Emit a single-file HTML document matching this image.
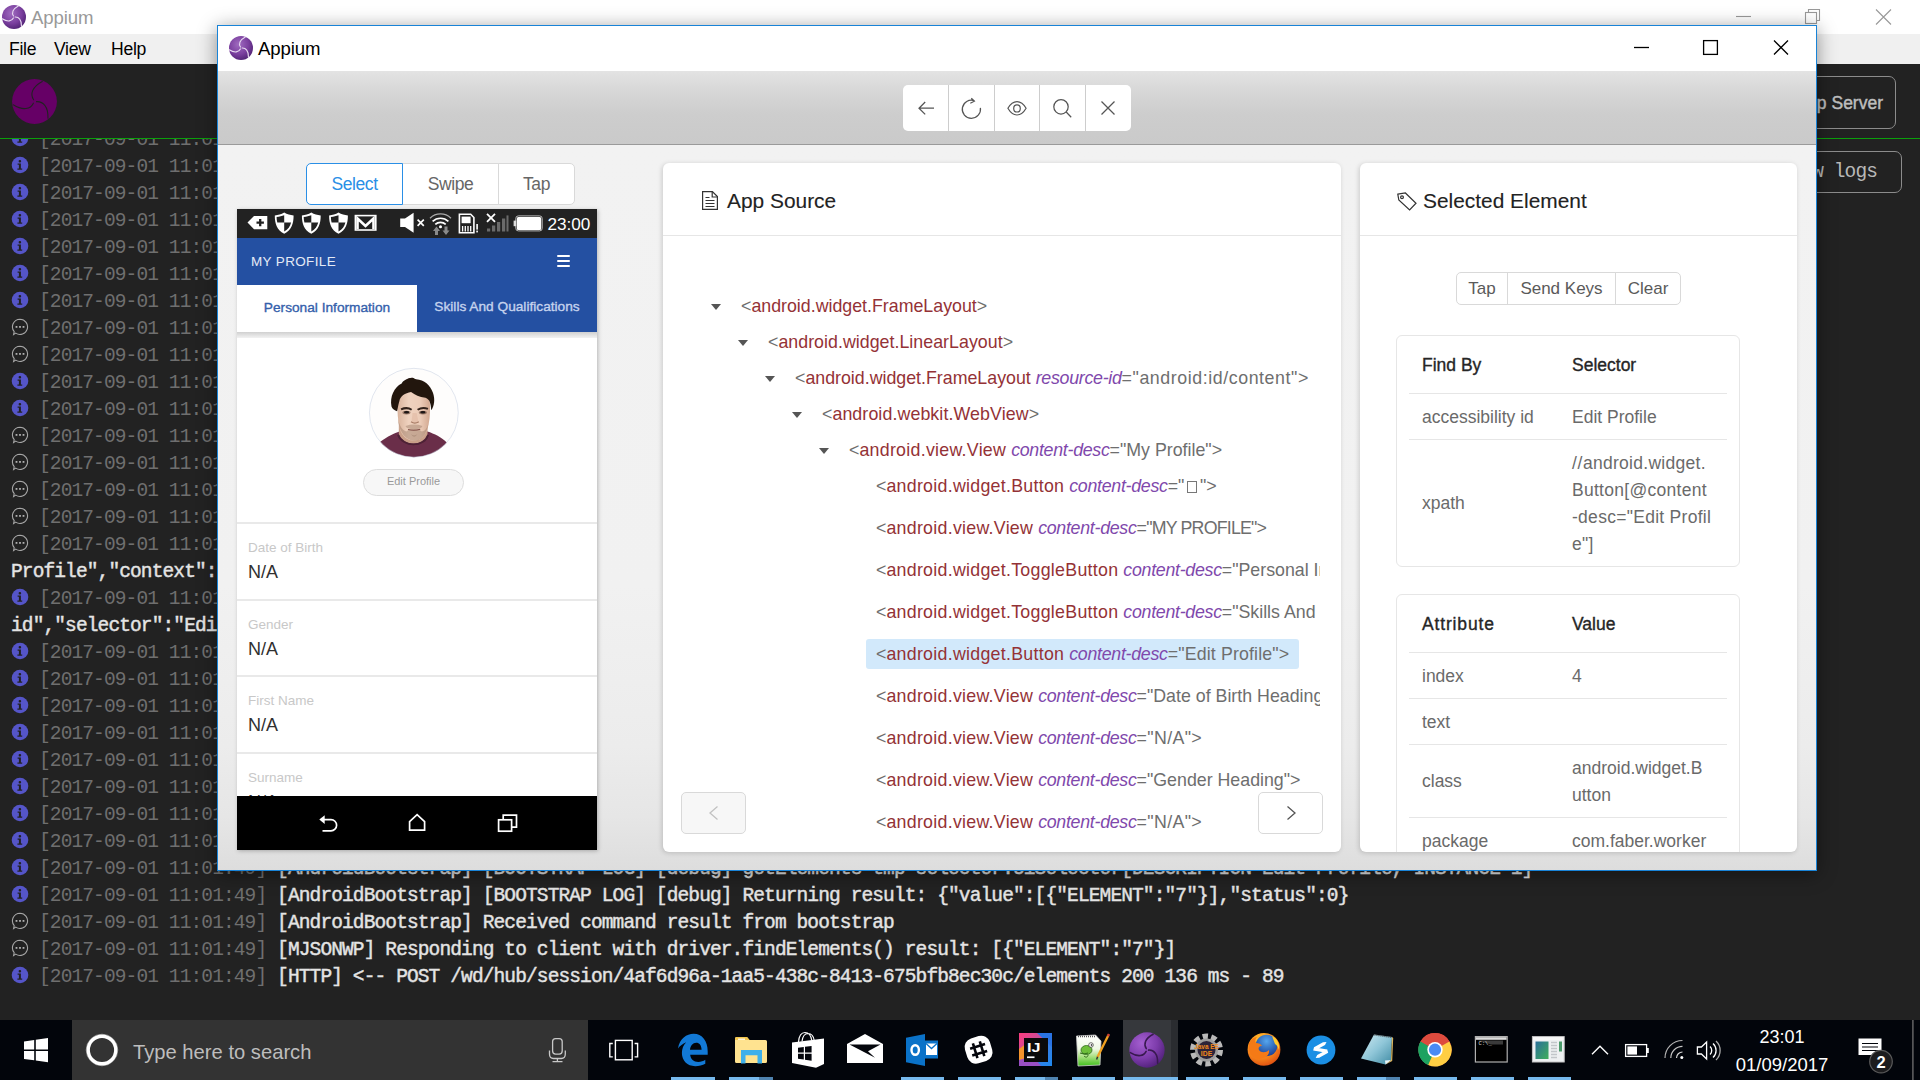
<!DOCTYPE html>
<html>
<head>
<meta charset="utf-8">
<title>Appium</title>
<style>
*{box-sizing:border-box;margin:0;padding:0}
html,body{width:1920px;height:1080px;overflow:hidden;background:#222222;font-family:"Liberation Sans",sans-serif;}
.abs{position:absolute}
#bg{position:absolute;left:0;top:0;width:1920px;height:1020px;background:#222222;overflow:hidden}
#bg .title{position:absolute;left:0;top:0;width:1920px;height:34px;background:#fff}
#bg .title .t{position:absolute;left:31px;top:7px;font-size:18.600px;color:#999;letter-spacing:-0.100px}
#bg .menu{position:absolute;left:0;top:34px;width:1920px;height:30px;background:#f0f0f0}
#bg .menu span{position:absolute;top:4.500px;font-size:17.600px;letter-spacing:-0.300px;color:#000}
#bg .green{position:absolute;left:0;top:138px;width:1920px;height:1px;background:#0ba00b}
.log{position:absolute;left:0;width:1920px;height:27px;font-family:"Liberation Mono",monospace;font-size:19.5px;letter-spacing:-0.88px;line-height:27px;white-space:pre;color:#e4e4e4;-webkit-text-stroke:0.420px #e4e4e4}
.log .ts{color:#6f6f6f;-webkit-text-stroke:0}
.log .tx{position:absolute;left:39px;top:1.500px}
.log .cont{position:absolute;left:11px;top:1.500px}
.ic{position:absolute;left:11px;top:3.900px;width:18px;height:18px}
#logwrap{position:absolute;left:0;top:139px;width:1920px;height:881px;overflow:hidden}
#fg{position:absolute;left:217px;top:25px;width:1600px;height:846px;border:1px solid #1883d7;background:linear-gradient(to bottom,#f2f2f2 0px,#f2f2f2 119px,#f1f1f1 560px,#ececec 720px,#e6e6e6 790px,#dddddd 846px);box-shadow:0 3px 18px rgba(0,0,0,.42);overflow:hidden}
#fg .wtitle{position:absolute;left:0;top:0;width:100%;height:45px;background:#fff}
#fg .wtitle .t{position:absolute;left:40px;top:12.300px;font-size:18.600px;color:#000;letter-spacing:-0.100px}
#fg .tool{position:absolute;left:0;top:45px;width:100%;height:74px;background:linear-gradient(#e3e3e3 0%,#d6d6d6 30%,#cdcdcd 60%,#cacaca 100%);border-bottom:1px solid #9a9a9a}
.card{position:absolute;background:#fff;border-radius:6px;box-shadow:-1px 1px 5px rgba(0,0,0,.17);overflow:hidden}

#fgi{position:absolute;left:-218px;top:-26px;width:1920px;height:1080px}
.tb{background:#fff;border-radius:5px;overflow:hidden}
.tb i{position:absolute;top:0;width:1px;height:46px;background:#cdcdcd}
.seg{font-size:17.500px;letter-spacing:-0.400px;color:#666}
.seg span{position:absolute;top:0;height:42px;line-height:40px;text-align:center;background:#fff;border:1px solid #d9d9d9}
.seg span:first-child{border-radius:5px 0 0 5px}
.seg span:last-child{border-radius:0 5px 5px 0}
.seg span.on{color:#2a8fe6;border-color:#2a8fe6;z-index:2}
#phone{position:absolute;left:237px;top:209px;width:360px;height:641px;background:#fff;overflow:hidden;box-shadow:1px 1px 4px rgba(0,0,0,.25)}
#phone .sbar{position:absolute;left:0;top:0;width:360px;height:29px;background:#222}
#phone .hdr{position:absolute;left:0;top:28.5px;width:360px;height:48px;background:#2450a2}
#phone .mp{position:absolute;left:14px;top:16.200px;font-size:13.500px;letter-spacing:0.350px;color:#e4eaf6}
#phone .ham{position:absolute;left:320px;top:17px;width:13px;height:13px}
#phone .ham b{display:block;height:2.6px;background:#fff;margin-bottom:2.5px;border-radius:1px}
#phone .tabs{position:absolute;left:0;top:76px;width:360px;height:47px;background:#2450a2}
#phone .t1{position:absolute;left:0;top:0;width:180px;height:47px;background:#fff;color:#3460ab;-webkit-text-stroke:0.350px #3460ab;font-size:13.700px;text-align:center;line-height:45px}
#phone .t2{position:absolute;left:180px;top:0;width:180px;height:47px;color:#c5d3ee;-webkit-text-stroke:0.350px #c5d3ee;font-size:13.700px;text-align:center;line-height:43px}
#phone .tshadow{position:absolute;left:0;top:123px;width:360px;height:6px;background:linear-gradient(#d0d0d0,#f2f2f2)}
#phone .editbtn{position:absolute;left:126px;top:260px;width:101px;height:27px;border:1px solid #ddd;border-radius:14px;background:#f7f7f7;color:#9a9a9a;font-size:11px;text-align:center;line-height:23px}
#phone .sep{position:absolute;left:0;width:360px;height:2px;background:#e9e9e9}
#phone .lbl{position:absolute;left:11px;font-size:13.500px;color:#c8c8c8;margin-top:-0.500px}
#phone .val{position:absolute;left:11px;font-size:18px;color:#303030;margin-top:0.700px}
#phone .nav{position:absolute;left:0;top:587px;width:360px;height:54px;background:#000}

#srci{position:absolute;left:-663px;top:-163px;width:1920px;height:1080px}
#seli{position:absolute;left:-1360px;top:-163px;width:1920px;height:1080px}
.ch{position:absolute;font-size:20.900px;color:#222;line-height:26px;-webkit-text-stroke:0.120px #222;white-space:nowrap;margin-top:-0.600px}
#treeclip{position:absolute;left:663px;top:236px;width:657px;height:616px;overflow:hidden}
#treeclip>div{margin-left:-663px;margin-top:-236px}
.tr{position:absolute;font-size:17.800px;line-height:29.400px;height:30px;white-space:nowrap;padding:0 10px;margin-left:-673px !important;border-radius:3px}
.tr.sel{background:#d2e9fb;padding-top:1px;margin-top:-237px !important}
.tr .b{color:#6e6e6e}.tr .tg{color:#943236;letter-spacing:0.280px}.tr .at{color:#8048ac;font-style:italic;letter-spacing:-0.280px}.tr .bx{display:inline-block;width:10px;height:12px;border:1px solid #777;margin:0 2.800px;vertical-align:-1px}
.car{position:absolute;width:0;height:0;border-left:5px solid transparent;border-right:5px solid transparent;border-top:6.500px solid #555}
.pg{position:absolute;width:65px;height:42px;border:1px solid #d9d9d9;border-radius:5px;background:#fff;display:flex;align-items:center;justify-content:center}
.pg.dis{background:#f7f7f7}
.bgrp{font-size:17px;color:#5a5a5a}
.bgrp span{position:absolute;top:0;height:33px;line-height:31px;text-align:center;border:1px solid #d9d9d9;background:#fff}
.bgrp span:first-child{border-radius:5px 0 0 5px}.bgrp span:last-child{border-radius:0 5px 5px 0}
.tbl{border:1px solid #e6e6e6;border-radius:6px}
.tbl .th{position:absolute;font-size:17.500px;color:#262626;line-height:26px;-webkit-text-stroke:0.350px #262626;white-space:nowrap;margin-top:-2.500px}
.tbl .td{position:absolute;font-size:17.500px;color:#6a6a6a;line-height:27px;white-space:nowrap}
.tbl .ln{position:absolute;left:12px;width:318px;height:1px;background:#e6e6e6;margin-top:-1px}
#task{position:absolute;left:0;top:1020px;width:1920px;height:60px;background:#02050b}
</style>
</head>
<body>
<div id="bg">
  <div class="title"><span class="t">Appium</span></div>
  <div class="menu"><span style="left:9px">File</span><span style="left:54px">View</span><span style="left:111px">Help</span></div>
  <svg class="abs" style="left:1px;top:4px" width="26" height="26" viewBox="0 0 26 26"><use href="#applogo"/></svg>
  <svg class="abs" style="left:11px;top:78px" width="47" height="47" viewBox="0 0 26 26"><use href="#applogo2"/></svg>
  <svg class="abs" style="left:1732px;top:6px" width="170" height="22" viewBox="0 0 170 22" fill="none" stroke="#999" stroke-width="1.1"><path d="M4 10.5h15"/><rect x="73.500" y="6.500" width="11" height="11"/><path d="M76.500 6.500v-3h11v11h-3"/><path d="M144 3.500l15 15M159 3.500l-15 15"/></svg>
  <div class="abs" style="left:1760px;top:76px;width:136px;height:53px;border:1px solid #8c8c8c;border-radius:7px;text-align:right;padding-right:12px;font-size:17.500px;line-height:52px;color:#bdbdbd;-webkit-text-stroke:0.450px #bdbdbd;white-space:nowrap">Stop Server</div>
  <div class="abs" style="left:1760px;top:151px;width:142px;height:42px;border:1px solid #8c8c8c;border-radius:7px;text-align:right;padding-right:24px;font-family:'Liberation Mono',monospace;font-size:19.500px;letter-spacing:-0.900px;line-height:41.600px;color:#b8b8b8;white-space:nowrap">Raw logs</div>
  <div class="green"></div>
  <svg width="0" height="0" style="position:absolute"><defs>
<radialGradient id="lg" cx="0.4" cy="0.35" r="0.7"><stop offset="0" stop-color="#a06cc0"/><stop offset="0.6" stop-color="#7a3f9e"/><stop offset="1" stop-color="#4f2273"/></radialGradient>
<symbol id="applogo" viewBox="-13 -13 26 26"><circle r="12" fill="url(#lg)"/><g fill="none" stroke="#e9dcf2" stroke-width="1.1" stroke-linecap="round"><path id="sw" d="M4.300-11.100C-1.500-8-2.500-4-0.500-1"/><use href="#sw" transform="rotate(120)"/><use href="#sw" transform="rotate(240)"/></g></symbol>
<radialGradient id="lg2" cx="0.350" cy="0.300" r="0.800"><stop offset="0" stop-color="#a45fd0"/><stop offset="0.550" stop-color="#7d3cab"/><stop offset="1" stop-color="#4b1d73"/></radialGradient>
<symbol id="applogo2" viewBox="-13 -13 26 26"><circle r="12.400" fill="#660066"/><g fill="none" stroke="#222" stroke-width="0.6" stroke-linecap="round"><use href="#sw"/><use href="#sw" transform="rotate(120)"/><use href="#sw" transform="rotate(240)"/></g></symbol>
<symbol id="ic-info" viewBox="0 0 18 18"><circle cx="9" cy="9" r="8.3" fill="#5555c8"/><path d="M7.6 5.2a1.3 1.3 0 1 0 2.6 0a1.3 1.3 0 1 0-2.6 0zM6.6 7.6h3.3v5h1.3v1.1H6.4v-1.1h1.5V8.7H6.6z" fill="#222"/></symbol>
<symbol id="ic-dbg" viewBox="0 0 18 18"><path d="M9 1.2a7.6 7.6 0 1 1-4.3 13.9L2.6 16.6l0.6-3A7.6 7.6 0 0 1 9 1.2z" fill="none" stroke="#a6a6a6" stroke-width="1.1"/><rect x="4.6" y="8" width="1.8" height="1.8" fill="#b0b0b0"/><rect x="8.1" y="8" width="1.8" height="1.8" fill="#b0b0b0"/><rect x="11.6" y="8" width="1.8" height="1.8" fill="#b0b0b0"/></symbol>
</defs></svg>
<div id="logwrap">
<div class="log" style="top:-14.0px"><svg class="ic"><use href="#ic-info"/></svg><span class="tx"><span class="ts">[2017-09-01 11:01:49]</span></span></div>
<div class="log" style="top:13.0px"><svg class="ic"><use href="#ic-info"/></svg><span class="tx"><span class="ts">[2017-09-01 11:01:49]</span></span></div>
<div class="log" style="top:40.0px"><svg class="ic"><use href="#ic-info"/></svg><span class="tx"><span class="ts">[2017-09-01 11:01:49]</span></span></div>
<div class="log" style="top:67.0px"><svg class="ic"><use href="#ic-info"/></svg><span class="tx"><span class="ts">[2017-09-01 11:01:49]</span></span></div>
<div class="log" style="top:94.0px"><svg class="ic"><use href="#ic-info"/></svg><span class="tx"><span class="ts">[2017-09-01 11:01:49]</span></span></div>
<div class="log" style="top:121.0px"><svg class="ic"><use href="#ic-info"/></svg><span class="tx"><span class="ts">[2017-09-01 11:01:49]</span></span></div>
<div class="log" style="top:148.0px"><svg class="ic"><use href="#ic-info"/></svg><span class="tx"><span class="ts">[2017-09-01 11:01:49]</span></span></div>
<div class="log" style="top:175.0px"><svg class="ic"><use href="#ic-dbg"/></svg><span class="tx"><span class="ts">[2017-09-01 11:01:49]</span></span></div>
<div class="log" style="top:202.0px"><svg class="ic"><use href="#ic-dbg"/></svg><span class="tx"><span class="ts">[2017-09-01 11:01:49]</span></span></div>
<div class="log" style="top:229.0px"><svg class="ic"><use href="#ic-info"/></svg><span class="tx"><span class="ts">[2017-09-01 11:01:49]</span></span></div>
<div class="log" style="top:256.0px"><svg class="ic"><use href="#ic-info"/></svg><span class="tx"><span class="ts">[2017-09-01 11:01:49]</span></span></div>
<div class="log" style="top:283.0px"><svg class="ic"><use href="#ic-dbg"/></svg><span class="tx"><span class="ts">[2017-09-01 11:01:49]</span></span></div>
<div class="log" style="top:310.0px"><svg class="ic"><use href="#ic-dbg"/></svg><span class="tx"><span class="ts">[2017-09-01 11:01:49]</span></span></div>
<div class="log" style="top:337.0px"><svg class="ic"><use href="#ic-dbg"/></svg><span class="tx"><span class="ts">[2017-09-01 11:01:49]</span></span></div>
<div class="log" style="top:364.0px"><svg class="ic"><use href="#ic-dbg"/></svg><span class="tx"><span class="ts">[2017-09-01 11:01:49]</span></span></div>
<div class="log" style="top:391.0px"><svg class="ic"><use href="#ic-dbg"/></svg><span class="tx"><span class="ts">[2017-09-01 11:01:49]</span></span></div>
<div class="log" style="top:418.0px"><span class="cont">Profile","context":"NATIVE_APP"</span></div>
<div class="log" style="top:445.0px"><svg class="ic"><use href="#ic-info"/></svg><span class="tx"><span class="ts">[2017-09-01 11:01:49]</span></span></div>
<div class="log" style="top:472.0px"><span class="cont">id","selector":"Edit Profile"</span></div>
<div class="log" style="top:499.0px"><svg class="ic"><use href="#ic-info"/></svg><span class="tx"><span class="ts">[2017-09-01 11:01:49]</span></span></div>
<div class="log" style="top:526.0px"><svg class="ic"><use href="#ic-info"/></svg><span class="tx"><span class="ts">[2017-09-01 11:01:49]</span></span></div>
<div class="log" style="top:553.0px"><svg class="ic"><use href="#ic-info"/></svg><span class="tx"><span class="ts">[2017-09-01 11:01:49]</span></span></div>
<div class="log" style="top:580.0px"><svg class="ic"><use href="#ic-info"/></svg><span class="tx"><span class="ts">[2017-09-01 11:01:49]</span></span></div>
<div class="log" style="top:607.0px"><svg class="ic"><use href="#ic-info"/></svg><span class="tx"><span class="ts">[2017-09-01 11:01:49]</span></span></div>
<div class="log" style="top:634.0px"><svg class="ic"><use href="#ic-info"/></svg><span class="tx"><span class="ts">[2017-09-01 11:01:49]</span></span></div>
<div class="log" style="top:661.0px"><svg class="ic"><use href="#ic-info"/></svg><span class="tx"><span class="ts">[2017-09-01 11:01:49]</span></span></div>
<div class="log" style="top:688.0px"><svg class="ic"><use href="#ic-info"/></svg><span class="tx"><span class="ts">[2017-09-01 11:01:49]</span></span></div>
<div class="log" style="top:715.0px"><svg class="ic"><use href="#ic-info"/></svg><span class="tx"><span class="ts">[2017-09-01 11:01:49]</span> [AndroidBootstrap] [BOOTSTRAP LOG] [debug] getElements tmp selector:UiSelector[DESCRIPTION=Edit Profile, INSTANCE=1]</span></div>
<div class="log" style="top:742.0px"><svg class="ic"><use href="#ic-info"/></svg><span class="tx"><span class="ts">[2017-09-01 11:01:49]</span> [AndroidBootstrap] [BOOTSTRAP LOG] [debug] Returning result: {"value":[{"ELEMENT":"7"}],"status":0}</span></div>
<div class="log" style="top:769.0px"><svg class="ic"><use href="#ic-dbg"/></svg><span class="tx"><span class="ts">[2017-09-01 11:01:49]</span> [AndroidBootstrap] Received command result from bootstrap</span></div>
<div class="log" style="top:796.0px"><svg class="ic"><use href="#ic-dbg"/></svg><span class="tx"><span class="ts">[2017-09-01 11:01:49]</span> [MJSONWP] Responding to client with driver.findElements() result: [{"ELEMENT":"7"}]</span></div>
<div class="log" style="top:823.0px"><svg class="ic"><use href="#ic-info"/></svg><span class="tx"><span class="ts">[2017-09-01 11:01:49]</span> [HTTP] &lt;-- POST /wd/hub/session/4af6d96a-1aa5-438c-8413-675bfb8ec30c/elements 200 136 ms - 89</span></div>
</div>
</div>
<div id="fg">
  <div class="wtitle"><span class="t">Appium</span></div>
  <div class="tool"></div>
  <div id="fgi">
<!-- window title icon + controls -->
<svg class="abs" style="left:228px;top:35px" width="26" height="26" viewBox="0 0 26 26"><use href="#applogo"/></svg>
<svg class="abs" style="left:1632px;top:38px" width="160" height="20" viewBox="0 0 160 20" fill="none" stroke="#000" stroke-width="1.3">
<path d="M2 9.5h15"/><rect x="71.6" y="2.6" width="13.8" height="13.8"/><path d="M142 2.5l14 14M156 2.5l-14 14"/></svg>
<!-- toolbar buttons -->
<div class="abs tb" style="left:903px;top:85px;width:228px;height:46px">
 <i style="left:45px"></i><i style="left:91px"></i><i style="left:136px"></i><i style="left:182px"></i>
 <svg class="abs" style="left:13px;top:13px" width="20" height="20" viewBox="0 0 20 20" fill="none" stroke="#555" stroke-width="1.250"><path d="M18 10.200H3M9.200 4L3 10.200l6.200 6.200"/></svg>
 <svg class="abs" style="left:58px;top:12px" width="22" height="22" viewBox="0 0 22 22" fill="none" stroke="#555" stroke-width="1.250"><path d="M19.400 10.900A9.100 9.100 0 1 1 13.300 3.600M10.300 1.200l3.100 3-4.100 2.100"/></svg>
 <svg class="abs" style="left:103px;top:13px" width="22" height="20" viewBox="0 0 22 20" fill="none" stroke="#555" stroke-width="1.200"><path d="M1.900 10.300C4.500 5.800 7.500 3.600 11 3.600s6.500 2.200 9.100 6.700c-2.600 4.500-5.600 6.700-9.100 6.700S4.500 14.800 1.900 10.300z"/><ellipse cx="11" cy="10.400" rx="3.300" ry="3.600"/></svg>
 <svg class="abs" style="left:148px;top:12px" width="22" height="22" viewBox="0 0 22 22" fill="none" stroke="#555" stroke-width="1.250"><circle cx="10" cy="9.800" r="7.2"/><path d="M15.2 15l5 5.200"/></svg>
 <svg class="abs" style="left:197px;top:15px" width="16" height="16" viewBox="0 0 16 16" fill="none" stroke="#555" stroke-width="1.250"><path d="M1.500 1.500l13 13M14.500 1.500l-13 13"/></svg>
</div>
<!-- select/swipe/tap -->
<div class="abs seg" style="left:306px;top:163px;width:269px;height:42px">
 <span class="on" style="left:0;width:97px">Select</span><span style="left:96px;width:97px">Swipe</span><span style="left:192px;width:77px">Tap</span>
</div>
<!-- PHONE -->
<div id="phone">
 <div class="sbar"><svg class="abs" style="left:0;top:0" width="360" height="29" viewBox="237 209 360 29">
<g fill="#fff">
<path d="M247.500 222.600l6.500-6.600h13.300v13.200H254z"/>
<path id="shd" d="M284.200 212.600c3 1.800 6 2.600 9.400 2.800 0 8-2 14.500-9.400 18.300-7.400-3.800-9.400-10.300-9.400-18.300 3.400-0.200 6.400-1 9.400-2.800z"/>
<use href="#shd" x="27.100"/><use href="#shd" x="54.300"/>
</g>
<path d="M256.500 222.600h7.400M260.200 218.900v7.400" stroke="#222" stroke-width="2.300"/>
<g fill="#222"><path id="shq" d="M284.200 215.300v7.300h-6.900c-0.500-2-0.700-3.600-0.700-5.600 3-0.300 5.200-0.800 7.600-1.700zM284.200 222.600h6.900c-1 4-3 6.800-6.900 9z"/><use href="#shq" x="27.100"/><use href="#shq" x="54.300"/></g>
<rect x="355.400" y="215.600" width="20.400" height="14.400" fill="none" stroke="#fff" stroke-width="1.600"/><path d="M357.500 229v-10.500l8 7.500 8-7.500V229" fill="none" stroke="#fff" stroke-width="2.600" stroke-linejoin="miter"/>
<path d="M400.200 218.600h4.800l8.600-5.800v20l-8.600-5.800h-4.800z" fill="#fff"/><path d="M417.600 219.600l6.200 6.200M423.800 219.600l-6.200 6.200" stroke="#fff" stroke-width="1.700"/>
<g fill="none" stroke="#fff" stroke-width="1.700"><path d="M430 218.200a15 15 0 0 1 21 0" stroke="#aaa" stroke-width="1.200"/><path d="M432.600 221.400a11.500 11.500 0 0 1 15.800 0"/><path d="M435.300 224.400a7.500 7.500 0 0 1 10.400 0"/></g><circle cx="440.500" cy="226.800" r="1.500" fill="#fff"/>
<path d="M436.500 226.500l3.500 4.500h-2v4h-3v-4h-2zM446 235l-3.500-4.500h2v-4h3v4h2z" fill="#8a8a8a"/>
<path d="M459.400 214.300h11.300l3.200 3.200v15.200h-14.500z" fill="none" stroke="#fff" stroke-width="1.600"/><rect x="461.600" y="216.600" width="9" height="6.600" fill="#fff"/><path d="M462.600 226v5.500M465.300 226v5.500M468 226v5.500M470.700 226v5.500" stroke="#fff" stroke-width="1.300"/><rect x="476.300" y="224" width="1.600" height="5.600" fill="#fff"/><rect x="476.300" y="230.600" width="1.600" height="1.800" fill="#fff"/>
<g fill="#6a6a6a"><rect x="487" y="228.500" width="3.200" height="3"/><rect x="492" y="225.500" width="3.200" height="6"/><rect x="497" y="222" width="3.200" height="9.500"/><rect x="502" y="218.500" width="3.200" height="13"/><rect x="506.500" y="215.400" width="2" height="16.100"/></g>
<path d="M487 213.800l8 8M495 213.800l-8 8" stroke="#fff" stroke-width="1.800"/>
<rect x="516.800" y="216.900" width="24.400" height="13" rx="1.500" fill="#fff" stroke="#fff" stroke-width="0"/><rect x="515.800" y="215.900" width="26.400" height="15" rx="2.500" fill="none" stroke="#bbb" stroke-width="1"/><rect x="513.600" y="220.600" width="2.600" height="5.600" fill="#ddd"/>
<text x="547.400" y="230" font-family="Liberation Sans" font-size="17.200" fill="#fff" textLength="43" lengthAdjust="spacingAndGlyphs">23:00</text>
</svg>
</div>
 <div class="hdr"><span class="mp">MY PROFILE</span><div class="ham"><b></b><b></b><b></b></div></div>
 <div class="tabs"><div class="t1">Personal Information</div><div class="t2">Skills And Qualifications</div></div>
 <div class="tshadow"></div>
 <svg class="abs" style="left:117px;top:149px" width="120" height="110" viewBox="0 0 1178 1080">
<defs><clipPath id="avc"><circle cx="587.500" cy="537.500" r="436"/></clipPath><filter id="avb" x="-5%" y="-5%" width="110%" height="110%"><feGaussianBlur stdDeviation="5"/></filter>
<linearGradient id="skg" x1="0" y1="0" x2="1" y2="0"><stop offset="0" stop-color="#d9b39c"/><stop offset="0.350" stop-color="#efd2bf"/><stop offset="0.700" stop-color="#ecccb8"/><stop offset="1" stop-color="#d2a890"/></linearGradient></defs>
<g clip-path="url(#avc)"><rect width="1178" height="1080" fill="#fefdfc"/>
<g filter="url(#avb)">
<path d="M255 825C330 768 400 740 445 722L720 722C790 742 860 782 905 825L1060 1010H120z" fill="#6b2f48"/>
<path d="M440 600V745C490 870 680 870 722 745V600z" fill="#c9a089"/>
<path d="M432 755C480 880 690 880 728 755" fill="none" stroke="#4d2136" stroke-width="18"/>
<path d="M425 430C425 340 500 322 590 328C700 330 752 380 746 470C748 560 742 640 716 715C690 785 640 812 590 812C530 812 470 770 450 700C430 620 425 520 425 430z" fill="url(#skg)"/>
<path d="M432 600C445 740 515 812 590 812C660 812 712 765 735 620C722 690 700 715 665 722C640 690 540 690 515 722C480 715 450 680 432 600z" fill="#9a7a66" opacity="0.450"/>
<path d="M505 668Q590 640 672 668Q660 700 590 700Q520 700 505 668z" fill="#9a7a66" opacity="0.450"/>
<path d="M560 745Q590 775 622 745Q590 800 560 745z" fill="#8a6a58" opacity="0.400"/>
<path d="M368 475C350 380 395 285 468 250C490 205 560 185 610 208C690 212 748 268 775 340C798 405 788 475 758 512C754 445 744 405 702 390C640 384 600 364 560 334C500 344 455 374 445 424C435 454 430 494 423 522C400 510 376 500 368 475z" fill="#22160f"/>
<path d="M520 215C540 190 590 185 600 215z" fill="#22160f"/>
<path d="M462 505Q520 478 566 508M624 508Q672 478 726 500" fill="none" stroke="#33231b" stroke-width="20"/>
<ellipse cx="515" cy="536" rx="40" ry="19" fill="#7a5a4c" opacity="0.700"/><ellipse cx="676" cy="536" rx="40" ry="19" fill="#7a5a4c" opacity="0.700"/>
<ellipse cx="516" cy="533" rx="26" ry="13" fill="#1c1412"/><ellipse cx="676" cy="533" rx="26" ry="13" fill="#1c1412"/>
<path d="M575 540L565 620Q596 648 632 620L615 540" fill="#e2bca6" opacity="0.700"/>
<path d="M560 626Q596 652 636 626" fill="none" stroke="#a87c66" stroke-width="13"/>
<path d="M530 702Q590 718 650 700" fill="none" stroke="#84524a" stroke-width="11"/>
</g></g>
<circle cx="587.500" cy="537.500" r="436" fill="none" stroke="#c4cde0" stroke-width="5"/>
</svg>

 <div class="editbtn">Edit Profile</div>
 <div class="sep" style="top:313px"></div>
 <div class="lbl" style="top:331px">Date of Birth</div><div class="val" style="top:352px">N/A</div>
 <div class="sep" style="top:390px"></div>
 <div class="lbl" style="top:408px">Gender</div><div class="val" style="top:429px">N/A</div>
 <div class="sep" style="top:466px"></div>
 <div class="lbl" style="top:484px">First Name</div><div class="val" style="top:505px">N/A</div>
 <div class="sep" style="top:543px"></div>
 <div class="lbl" style="top:561px">Surname</div><div class="val" style="top:582px">N/A</div>
 <div class="nav"><svg class="abs" style="left:0;top:1px" width="360" height="53" viewBox="237 797 360 53" fill="none" stroke="#fff" stroke-width="1.700">
<path d="M323.500 819.600h7.500a5.600 5.600 0 0 1 0 11.200h-8.500"/><path d="M319.300 819.600l5.400-4.300v8.600z" fill="#fff" stroke="none"/>
<path d="M409.600 830.200v-8.600l7.500-7 7.500 7v8.600z"/>
<rect x="498.600" y="819.800" width="13" height="11.400"/><path d="M503.200 819.500v-4.300h13.300v12h-4.600"/>
</svg>
</div>
</div>
<div class="card" style="left:663px;top:163px;width:678px;height:689px">
<div id="srci">
<svg class="abs" style="left:701px;top:190px" width="18" height="21" viewBox="0 0 18 21" fill="none" stroke="#333" stroke-width="1.2"><path d="M1.600 1.600h9.800l5 5v12.800h-14.800z"/><path d="M11.200 1.800v5.200h5.200"/><path d="M4.500 10.500h9M4.500 13.500h9M4.500 16.500h9M4.500 7.500h4" stroke-width="1"/></svg>
<div class="ch" style="left:727px;top:189px">App Source</div>
<div class="abs" style="left:663px;top:235px;width:678px;height:1px;background:#e6e6e6"></div>
<div id="treeclip">
<div class="car" style="left:711px;top:304px"></div>
<div class="tr" style="left:741px;top:292px"><span class="b">&lt;</span><span class="tg" style="letter-spacing:0">android.widget.FrameLayout</span><span class="b">&gt;</span></div>
<div class="car" style="left:738px;top:340px"></div>
<div class="tr" style="left:768px;top:328px"><span class="b">&lt;</span><span class="tg" style="letter-spacing:0.030px">android.widget.LinearLayout</span><span class="b">&gt;</span></div>
<div class="car" style="left:765px;top:376px"></div>
<div class="tr" style="left:795px;top:364px"><span class="b">&lt;</span><span class="tg" style="letter-spacing:0">android.widget.FrameLayout</span> <span class="at">resource-id</span><span class="b" style="letter-spacing:0.570px">=&quot;android:id/content&quot;</span><span class="b">&gt;</span></div>
<div class="car" style="left:792px;top:412px"></div>
<div class="tr" style="left:822px;top:400px"><span class="b">&lt;</span><span class="tg" style="letter-spacing:0.100px">android.webkit.WebView</span><span class="b">&gt;</span></div>
<div class="car" style="left:819px;top:448px"></div>
<div class="tr" style="left:849px;top:436px"><span class="b">&lt;</span><span class="tg">android.view.View</span> <span class="at">content-desc</span><span class="b">=&quot;My Profile&quot;</span><span class="b">&gt;</span></div>
<div class="tr" style="left:876px;top:471.5px"><span class="b">&lt;</span><span class="tg">android.widget.Button</span> <span class="at">content-desc</span><span class="b">=&quot;<i class="bx"></i>&quot;</span><span class="b">&gt;</span></div>
<div class="tr" style="left:876px;top:513.5px"><span class="b">&lt;</span><span class="tg">android.view.View</span> <span class="at">content-desc</span><span class="b" style="letter-spacing:-0.800px">=&quot;MY PROFILE&quot;</span><span class="b">&gt;</span></div>
<div class="tr" style="left:876px;top:555.5px"><span class="b">&lt;</span><span class="tg">android.widget.ToggleButton</span> <span class="at">content-desc</span><span class="b">=&quot;Personal Information&quot;</span><span class="b">&gt;</span></div>
<div class="tr" style="left:876px;top:597.5px"><span class="b">&lt;</span><span class="tg">android.widget.ToggleButton</span> <span class="at">content-desc</span><span class="b">=&quot;Skills And Qualifications&quot;</span><span class="b">&gt;</span></div>
<div class="tr sel" style="left:876px;top:639.5px"><span class="b">&lt;</span><span class="tg">android.widget.Button</span> <span class="at">content-desc</span><span class="b" style="letter-spacing:0.140px">=&quot;Edit Profile&quot;</span><span class="b">&gt;</span></div>
<div class="tr" style="left:876px;top:681.5px"><span class="b">&lt;</span><span class="tg">android.view.View</span> <span class="at">content-desc</span><span class="b">=&quot;Date of Birth Heading&quot;</span><span class="b">&gt;</span></div>
<div class="tr" style="left:876px;top:723.5px"><span class="b">&lt;</span><span class="tg">android.view.View</span> <span class="at">content-desc</span><span class="b" style="letter-spacing:0.350px">=&quot;N/A&quot;</span><span class="b">&gt;</span></div>
<div class="tr" style="left:876px;top:765.5px"><span class="b">&lt;</span><span class="tg">android.view.View</span> <span class="at">content-desc</span><span class="b">=&quot;Gender Heading&quot;</span><span class="b">&gt;</span></div>
<div class="tr" style="left:876px;top:807.5px"><span class="b">&lt;</span><span class="tg">android.view.View</span> <span class="at">content-desc</span><span class="b" style="letter-spacing:0.350px">=&quot;N/A&quot;</span><span class="b">&gt;</span></div>
</div>
<div class="pg dis" style="left:681px;top:792px"><svg width="14" height="18" viewBox="0 0 14 18" fill="none" stroke="#c2c2c2" stroke-width="1.300"><path d="M10.500 2.500l-7.500 6.500 7.500 6.500"/></svg></div>
<div class="pg" style="left:1258px;top:792px"><svg width="14" height="18" viewBox="0 0 14 18" fill="none" stroke="#555" stroke-width="1.300"><path d="M3.500 2.500l7.500 6.500-7.500 6.500"/></svg></div>
</div></div>
<div class="card" style="left:1360px;top:163px;width:437px;height:689px">
<div id="seli">
<svg class="abs" style="left:1396px;top:191px" width="22" height="21" viewBox="0 0 22 21" fill="none" stroke="#333" stroke-width="1.200"><path d="M1.800 3.200l7.600-1.200 10.600 10.200-6.400 6.800-10.800-10z"/><circle cx="6" cy="6.200" r="1.400"/></svg>
<div class="ch" style="left:1423px;top:189px">Selected Element</div>
<div class="abs" style="left:1360px;top:235px;width:437px;height:1px;background:#e6e6e6"></div>
<div class="abs bgrp" style="left:1456px;top:272px;width:225px;height:33px"><span style="left:0;width:52px">Tap</span><span style="left:51px;width:109px">Send Keys</span><span style="left:159px;width:66px">Clear</span></div>
<div class="abs tbl" style="left:1396px;top:335px;width:344px;height:232px">
 <div class="th" style="left:25px;top:18px">Find By</div><div class="th" style="left:175px;top:18px">Selector</div>
 <div class="ln" style="top:58px"></div>
 <div class="td" style="left:25px;top:68px">accessibility id</div><div class="td" style="left:175px;top:68px">Edit Profile</div>
 <div class="ln" style="top:104px"></div>
 <div class="td" style="left:25px;top:154px">xpath</div><div class="td" style="left:175px;top:114px;letter-spacing:0.280px"><span style="letter-spacing:0.600px">//</span>android.widget.<br>Button[@content<br>-desc=&quot;Edit Profil<br>e&quot;]</div>
</div>
<div class="abs tbl" style="left:1396px;top:594px;width:344px;height:300px">
 <div class="th" style="left:25px;top:18px;letter-spacing:0.850px">Attribute</div><div class="th" style="left:175px;top:18px">Value</div>
 <div class="ln" style="top:58px"></div>
 <div class="td" style="left:25px;top:68px">index</div><div class="td" style="left:175px;top:68px">4</div>
 <div class="ln" style="top:104px"></div>
 <div class="td" style="left:25px;top:114px">text</div>
 <div class="ln" style="top:150px"></div>
 <div class="td" style="left:25px;top:173px">class</div><div class="td" style="left:175px;top:160px">android.widget.B<br>utton</div>
 <div class="ln" style="top:223px"></div>
 <div class="td" style="left:25px;top:233px">package</div><div class="td" style="left:175px;top:233px">com.faber.worker</div>
</div>
</div></div>

</div>

</div>
<div id="task">
  <div class="abs" style="left:72px;top:0;width:516px;height:60px;background:#333"></div>
<div class="abs" style="left:1123px;top:0;width:48px;height:60px;background:#36383c"></div>
<div class="abs" style="left:1171px;top:0;width:7px;height:60px;background:#2a2c30"></div>
<div class="abs" style="left:133px;top:20px;font-size:20.200px;color:#bdbdbd;line-height:24px;white-space:nowrap">Type here to search</div>
<div class="abs" style="left:1742px;top:5px;width:80px;text-align:center;font-size:18px;color:#fff;line-height:24px">23:01</div>
<div class="abs" style="left:1732px;top:33px;width:100px;text-align:center;font-size:18.500px;color:#fff;line-height:24px;white-space:nowrap">01/09/2017</div>
<svg class="abs" style="left:0;top:0" width="1920" height="60" viewBox="0 1020 1920 60">
<!-- start -->
<g fill="#fff"><path d="M24 1041.400l10.200-1.400v9.400H24zM35.800 1039.800L48 1038v11.400H35.800zM24 1050.900h10.200v9.400L24 1058.900zM35.800 1050.900H48v11.400l-12.200-1.800z"/></g>
<!-- cortana -->
<circle cx="102" cy="1050" r="15.800" fill="none" stroke="#8a8a8a" stroke-width="1"/><circle cx="102" cy="1050" r="13.800" fill="none" stroke="#fff" stroke-width="3.400"/>
<!-- mic -->
<g fill="none" stroke="#c8c8c8" stroke-width="1.300"><rect x="552.600" y="1038.600" width="9.600" height="15.500" rx="3"/><path d="M549.500 1050.500v3.500q0 4.500 4 4.500h7.800q4 0 4-4.500v-3.500M557.400 1058.500v3M552.500 1061.600h10"/></g>
<!-- task view -->
<g fill="none" stroke="#fff" stroke-width="1.400"><rect x="615.400" y="1040.400" width="16.800" height="19.400"/><path d="M612.800 1043.500h-3v13.400h3M634.600 1043.500h3v13.400h-3"/></g>
<!-- edge -->
<path d="M678.0 1048.4C679.5 1038.8 686.6 1033.8 693.6 1033.8C702.2 1033.8 707.7 1041.1 707.7 1051.2L707.7 1054.7L690.2 1054.7C690.6 1059.1 693.6 1061.9 698.3 1061.9C700.9 1061.9 703.4 1061.1 705.3 1059.8L705.3 1063.8C702.5 1065.3 699.1 1066.2 695.2 1066.2C687.3 1066.2 681.9 1060.9 681.9 1053.1C681.9 1048.9 683.4 1045.0 686.2 1042.3C682.7 1043.8 680.0 1045.8 678.0 1048.4ZM690.0 1049.7C690.5 1045.8 692.8 1042.7 696.2 1042.7C699.4 1042.7 701.4 1045.3 701.6 1049.7Z" fill="#1279d6" fill-rule="evenodd"/>
<!-- explorer -->
<path d="M735 1038.500q0-1.500 1.500-1.500h10.500l2.500 3h16q1.500 0 1.500 1.500v20q0 1.500-1.500 1.500h-29q-1.500 0-1.500-1.500z" fill="#ffe390"/><path d="M735 1038.500q0-1.500 1.500-1.500h10.500l2.500 3h-14.500z" fill="#f3c74f"/><rect x="738" y="1038.600" width="7" height="1.200" fill="#fff"/>
<path d="M741 1050h21v13.600h-4.500v-8.400h-12v8.400H741z" fill="#3fb0ea"/>
<!-- store -->
<path d="M792 1042.500l32-4v25.500l-8 3.800-24-4.800z" fill="#fff"/><path d="M798.500 1042c0.500-6 3-9.500 6.500-9.500s6 3 6.800 8M802 1041.500c0.600-5 2.800-8 6-8s5.600 3 6.200 7" fill="none" stroke="#fff" stroke-width="1.200"/>
<g fill="#04060c"><path d="M798 1047.800l5.800-0.800v5.600H798zM805 1046.800l6.600-0.900v6.700H805zM798 1053.800h5.800v5.800l-5.800-0.900zM805 1053.800h6.600v7l-6.600-1z"/></g>
<!-- mail -->
<path d="M847 1044l18-10 18 10v19h-36z" fill="#fff"/><path d="M849.500 1044.600h31l-12.500 6.600 7 6.600z" fill="#04060c"/>
<!-- outlook -->
<path d="M906 1037.800l19-3.800v32l-19-3.800z" fill="#0a72c8"/><rect x="925" y="1040.500" width="13" height="18" fill="#0a72c8"/><path d="M926 1043.500h11v11.500h-11z" fill="#fff"/><path d="M926 1043.500l5.500 5 5.500-5" fill="none" stroke="#0a72c8" stroke-width="1.300"/><ellipse cx="915.200" cy="1050" rx="3.700" ry="4.800" fill="none" stroke="#fff" stroke-width="2.400"/>
<!-- slack -->
<g transform="rotate(-17 978.600 1049.700)"><rect x="965.600" y="1036.700" width="26" height="26" rx="9" fill="#fff"/><g stroke="#04060c" stroke-width="2.600" fill="none"><path d="M975 1042v15.500M982.200 1042v15.500M970.800 1046.200h15.600M970.800 1053.400h15.600"/></g></g>
<!-- intellij -->
<defs><linearGradient id="ij1" x1="0" y1="0" x2="1" y2="1"><stop offset="0" stop-color="#fd3c7d"/><stop offset="0.450" stop-color="#c0509f"/><stop offset="0.550" stop-color="#3b7be0"/><stop offset="1" stop-color="#1f8af0"/></linearGradient></defs>
<rect x="1019" y="1033" width="33" height="33" fill="url(#ij1)"/><path d="M1019 1049l8-6v23h-8z" fill="#f4942c"/><path d="M1019 1066v-6l14-4 8 10z" fill="#9a4fc4"/><path d="M1037 1033h15v14z" fill="#2a74e4"/>
<rect x="1024" y="1038" width="24" height="24" fill="#0a0a0a"/><rect x="1027" y="1056.400" width="7.500" height="1.700" fill="#fff"/>
<text x="1027" y="1051.500" font-family="Liberation Sans" font-weight="bold" font-size="12.500" fill="#fff" textLength="13.500" lengthAdjust="spacingAndGlyphs">IJ</text>
<!-- notepad++ -->
<defs><linearGradient id="npp" x1="0" y1="0" x2="0" y2="1"><stop offset="0" stop-color="#ffffff"/><stop offset="0.450" stop-color="#eef8e4"/><stop offset="0.700" stop-color="#a8e080"/><stop offset="1" stop-color="#3fc01c"/></linearGradient></defs>
<path d="M1076.500 1036l19-1 5.500 6-1 24-22 1z" fill="url(#npp)" stroke="#d0d0d0" stroke-width="0.800"/><path d="M1078 1036.500h17" stroke="#555" stroke-width="1.400" stroke-dasharray="1 1"/>
<ellipse cx="1086.500" cy="1050" rx="5.500" ry="4.500" fill="#6dbf3a" stroke="#2f6b1a" stroke-width="0.800"/><circle cx="1091" cy="1045" r="2.300" fill="#fff" stroke="#333" stroke-width="0.700"/><circle cx="1091.500" cy="1045" r="0.800" fill="#000"/><path d="M1080 1053q4 2 8 0M1084 1056c2 2 4 1 4-1" stroke="#2f6b1a" stroke-width="1" fill="none"/>
<path d="M1108.500 1035l-11 22" stroke="#f0a020" stroke-width="2.400"/><path d="M1109 1034l-1.200 2.200" stroke="#d04030" stroke-width="2.400"/><path d="M1097.600 1056.800l-1 2.800" stroke="#333" stroke-width="1.500"/>
<!-- appium -->
<svg x="1128.500" y="1031.500" width="37" height="37" viewBox="-13 -13 26 26"><circle r="12.400" fill="url(#lg2)"/><g fill="none" stroke="#38194f" stroke-width="1.100" stroke-linecap="round"><use href="#sw"/><use href="#sw" transform="rotate(120)"/><use href="#sw" transform="rotate(240)"/></g></svg>
<!-- java ee -->
<g><circle cx="1206.500" cy="1050" r="13" fill="none" stroke="#b9b9b9" stroke-width="7" stroke-dasharray="5.100 3.070"/><circle cx="1206.500" cy="1050" r="11.500" fill="#9d9d9d"/><circle cx="1206.500" cy="1050" r="9" fill="#2b2338"/>
<text x="1206.500" y="1048.600" text-anchor="middle" font-family="Liberation Sans" font-weight="bold" font-size="6.400" fill="#f08a1c">Java EE</text><text x="1206.500" y="1055.800" text-anchor="middle" font-family="Liberation Sans" font-weight="bold" font-size="6.800" fill="#f08a1c">IDE</text></g>
<!-- firefox -->
<defs><radialGradient id="ffx" cx="0.400" cy="0.300" r="0.800"><stop offset="0" stop-color="#ffd23a"/><stop offset="0.450" stop-color="#ff9a1e"/><stop offset="1" stop-color="#d9420f"/></radialGradient><radialGradient id="ffb" cx="0.500" cy="0.300" r="0.700"><stop offset="0" stop-color="#55a6ee"/><stop offset="1" stop-color="#1a3f95"/></radialGradient></defs>
<circle cx="1264" cy="1049.400" r="16.400" fill="url(#ffx)"/><circle cx="1266.500" cy="1045.500" r="10.800" fill="url(#ffb)"/><path d="M1249 1043c2-4 5-6 8-6-2 2-2 4-1 6 3 0 5 1 6 3-3 0-4 2-3 4 2 3 7 3 10 0 1 5-4 9-10 9-7 0-12-7-10-16z" fill="#f57a16"/><path d="M1272 1036c5 2 8 8 7 14-1-3-2-5-4-6z" fill="#ffcb2e"/>
<!-- S -->
<circle cx="1321" cy="1050" r="14.400" fill="#1b8fe4"/><path d="M1315 1050.500l10-5.500 1.500-3-3.500 0.200-9 5zM1327.200 1049.500l-10 5.500-1.500 3 3.500-0.200 9-5z" fill="#fff"/><path d="M1314 1047.200l13.200 2.300-0.800 3.300-13.200-2.300z" fill="#fff"/>
<!-- notepad -->
<defs><linearGradient id="npd" x1="0" y1="0" x2="1" y2="1"><stop offset="0" stop-color="#cfeaf2"/><stop offset="0.500" stop-color="#8fc6d8"/><stop offset="1" stop-color="#3f8ba4"/></linearGradient></defs>
<path d="M1374 1034.500l18 2.500-1 23-5.500 4.500-24.500-6z" fill="url(#npd)"/><path d="M1392 1037l1.200 1-1 23-6.700 3.500 5.500-4.500z" fill="#d9b35a"/><path d="M1385.500 1064.500l5.500-4.500-6 0.500z" fill="#e8f4f8"/><path d="M1374.500 1035l17 2.400" stroke="#444" stroke-width="1.300" stroke-dasharray="1 1"/>
<!-- chrome -->
<g><circle cx="1435" cy="1049.700" r="16.600" fill="#dd4b3e"/><path d="M1435 1049.700l-14.400-8.300a16.600 16.600 0 0 0 7.600 23.600z" fill="#1da261"/><path d="M1420.600 1041.400a16.600 16.600 0 0 0 7.600 23.600l6.800-15.300z" fill="#1da261"/><path d="M1435 1049.700l-6.800 15.300a16.600 16.600 0 0 0 22.900-19.800l-16.100 0z" fill="#ffce43"/><path d="M1435 1049.700h16.200a16.600 16.600 0 0 0-1.800-8.300h-14.400z" fill="#ffce43"/><path d="M1449.400 1041.400a16.600 16.600 0 0 0-28.800 0l7 4h14.800z" fill="#dd4b3e"/><circle cx="1435" cy="1049.700" r="7.700" fill="#fff"/><circle cx="1435" cy="1049.700" r="6.100" fill="#4a8af4"/></g>
<!-- cmd -->
<rect x="1475.400" y="1036.600" width="31.800" height="25.400" fill="#000" stroke="#b0b0b0" stroke-width="1.200"/><rect x="1476" y="1037.200" width="30.600" height="2.600" fill="#dcdcdc"/><path d="M1478 1040.500h25v4h-12z" fill="#3a3a3a"/><text x="1478.500" y="1045.400" font-family="Liberation Mono" font-size="5.500" fill="#ddd">C:\_</text>
<!-- window -->
<defs><linearGradient id="wg" x1="0" y1="0" x2="1" y2="1"><stop offset="0" stop-color="#2a6f9a"/><stop offset="1" stop-color="#3fae5a"/></linearGradient></defs>
<rect x="1532.400" y="1036.600" width="31.800" height="25.400" fill="#eef0f2" stroke="#c4c4c4" stroke-width="1"/><rect x="1533" y="1037.200" width="30.600" height="2.800" fill="#f8f8f8"/><rect x="1535.500" y="1041.500" width="13" height="17.500" fill="url(#wg)"/><path d="M1551 1042.500h6M1551 1045.500h6M1551 1048.500h6M1551 1051.500h6M1551 1054.500h6M1551 1057.500h6" stroke="#c2c6ca" stroke-width="1.400"/><rect x="1559" y="1041.500" width="3" height="10" fill="#4a9a6a"/>
<!-- tray -->
<path d="M1592 1054.200l8-8 8 8" fill="none" stroke="#fff" stroke-width="1.400"/>
<rect x="1625.600" y="1044.600" width="21" height="11.800" fill="none" stroke="#fff" stroke-width="1.300"/><rect x="1647" y="1048" width="1.800" height="5" fill="#fff"/><rect x="1627.400" y="1046.400" width="9.600" height="8.200" fill="#fff"/>
<g fill="none" stroke="#d8d8d8" stroke-width="1.200"><path d="M1676.500 1058a6 6 0 0 1 6-6"/><path d="M1670.800 1058a11.700 11.700 0 0 1 11.700-11.700" stroke="#c4c4c4"/><path d="M1665 1058a17.500 17.500 0 0 1 17.500-17.500" stroke="#b4b4b4"/></g><circle cx="1681.800" cy="1057.600" r="1.500" fill="#fff"/>
<g fill="none" stroke="#fff" stroke-width="1.300"><path d="M1697.400 1047h4l5.200-5v17l-5.200-5h-4z"/><path d="M1710 1046.500a5.500 5.500 0 0 1 0 8"/><path d="M1713 1043.500a9.500 9.500 0 0 1 0 14"/><path d="M1716 1041a13 13 0 0 1 0 19" stroke="#aaa"/></g>
<!-- notif -->
<path d="M1858.500 1038.500h23v16.500h-5v5l-5-5h-13z" fill="#fff"/><path d="M1862 1043.500h16M1862 1047h16M1862 1050.500h16" stroke="#02050b" stroke-width="1.200"/>
<circle cx="1881" cy="1061.600" r="11.300" fill="#1c1c1e" stroke="#5a5a5a" stroke-width="1.200"/>
<text x="1881" y="1067.600" text-anchor="middle" font-family="Liberation Sans" font-weight="bold" font-size="16.500" fill="#fff">2</text>
<rect x="1912.200" y="1020" width="1.400" height="60" fill="#6a6a6a"/>
<!-- underlines -->
<g fill="#76b9ed"><rect x="671" y="1077" width="44" height="3"/><rect x="729" y="1077" width="44" height="3"/><rect x="901" y="1077" width="43" height="3"/><rect x="958" y="1077" width="43" height="3"/><rect x="1015" y="1077" width="43" height="3"/><rect x="1072" y="1077" width="43" height="3"/><rect x="1123" y="1077" width="55" height="3"/><rect x="1186" y="1077" width="43" height="3"/><rect x="1243" y="1077" width="43" height="3"/><rect x="1300" y="1077" width="43" height="3"/><rect x="1357" y="1077" width="43" height="3"/><rect x="1414" y="1077" width="43" height="3"/><rect x="1471" y="1077" width="43" height="3"/><rect x="1528" y="1077" width="43" height="3"/></g>
<g fill="#4f83b0"><rect x="759" y="1077" width="14" height="3"/><rect x="1045" y="1077" width="13" height="3"/><rect x="1386" y="1077" width="14" height="3"/></g>
</svg>

</div>
</body>
</html>
